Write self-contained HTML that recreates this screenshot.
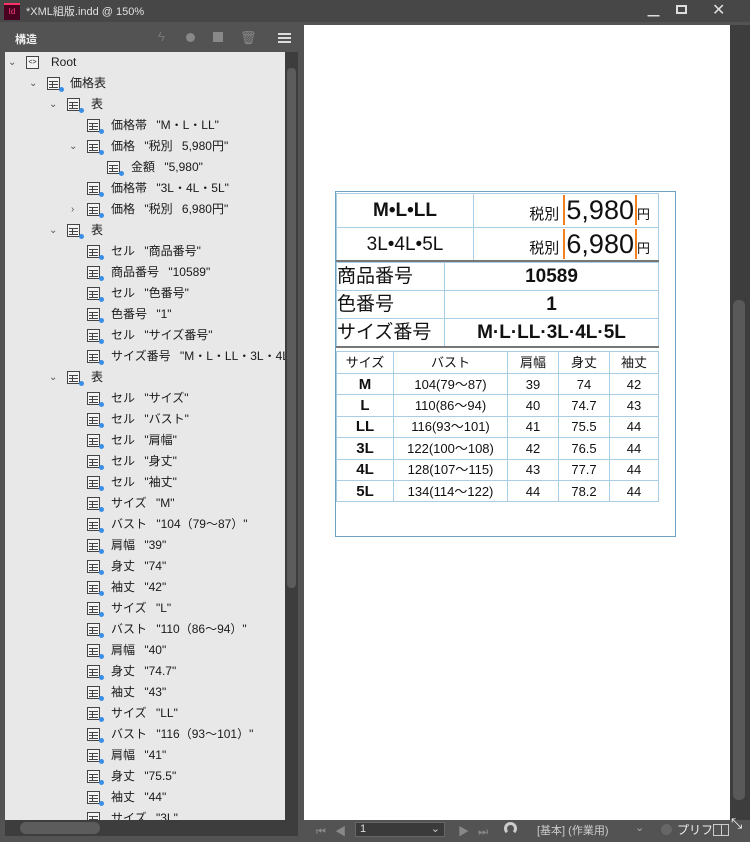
<!DOCTYPE html>
<html><head><meta charset="utf-8"><style>
*{margin:0;padding:0;box-sizing:border-box}
body{width:750px;height:842px;background:#535353;position:relative;overflow:hidden;font-family:"Liberation Sans","Noto Sans CJK JP",sans-serif}
.abs{position:absolute}
.tree{left:5px;top:52px;width:280px;height:768px;background:#e8e8e8;overflow:hidden}
.r{position:absolute;height:21px;font-size:12px;color:#1a1a1a;white-space:nowrap;line-height:21px;word-spacing:6px}
.ch{position:absolute;font-size:10px;color:#555;top:0}
.ic{position:absolute;top:4px;width:13px;height:13px;border:1px solid #444;background:#f4f4f4}
.ic.t::before{content:"";position:absolute;left:1px;right:1px;top:3px;height:1px;background:#444;box-shadow:0 3px 0 #444,0 6px 0 #444}
.ic.t::after{content:"";position:absolute;left:4px;top:3px;width:1px;height:7px;background:#444}
.dot{position:absolute;width:5px;height:5px;border-radius:50%;background:#3a8ee6;top:14px}
.doc{left:304px;top:25px;width:426px;height:795px;background:#fff}
table{border-collapse:collapse;position:absolute;table-layout:fixed}
td{border:1px solid #a9cde4;text-align:center;color:#111;padding:0;line-height:1;overflow:hidden;white-space:nowrap}
</style></head><body>
<div class="abs" style="left:0;top:0;width:750px;height:22px;background:#474747"></div>
<div class="abs" style="left:4px;top:3px;width:16px;height:17px;background:#49021f;border-top:2px solid #ff3366;color:#ff3d7f;font-size:8px;line-height:14px;text-align:center">Id</div>
<div class="abs" style="left:26px;top:3px;color:#e0e0e0;font-size:11px">*XML組版.indd @ 150%</div>
<div class="abs" style="left:640px;top:2px;width:27px;height:18px;color:#ddd;font-size:12px;text-align:center">▁</div>
<div class="abs" style="left:676px;top:5px;width:11px;height:9px;border:2px solid #ddd"></div>
<div class="abs" style="left:712px;top:0;color:#ddd;font-size:16px">✕</div>
<div class="abs" style="left:15px;top:31px;color:#eee;font-size:11px;font-weight:bold">構造</div>
<div class="abs" style="left:158px;top:29px;color:#777;font-size:13px">ϟ</div>
<div class="abs" style="left:186px;top:33px;width:9px;height:9px;border-radius:50%;background:#888"></div>
<div class="abs" style="left:213px;top:32px;width:10px;height:10px;background:#888"></div>
<div class="abs" style="left:240px;top:30px;color:#888;font-size:13px">🗑</div>
<div class="abs" style="left:278px;top:33px;width:13px;height:2px;background:#ddd;box-shadow:0 4px 0 #ddd,0 8px 0 #ddd"></div>
<div class="abs tree">
<div class="r" style="top:0"><span class="ch" style="left:3px">⌄</span><span class="ic" style="left:21px;font-size:7px;line-height:11px;text-align:center">&lt;&gt;</span><span style="position:absolute;left:46px">Root</span></div>
<div class="r" style="top:21px"><span class="ch" style="left:24px">⌄</span><span class="ic t" style="left:42px"></span><span class="dot" style="left:54px"></span><span style="position:absolute;left:65px">価格表</span></div>
<div class="r" style="top:42px"><span class="ch" style="left:44px">⌄</span><span class="ic t" style="left:62px"></span><span class="dot" style="left:74px"></span><span style="position:absolute;left:86px">表</span></div>
<div class="r" style="top:63px"><span class="ic t" style="left:82px"></span><span class="dot" style="left:94px"></span><span style="position:absolute;left:106px">価格帯 "M・L・LL"</span></div>
<div class="r" style="top:84px"><span class="ch" style="left:64px">⌄</span><span class="ic t" style="left:82px"></span><span class="dot" style="left:94px"></span><span style="position:absolute;left:106px">価格 "税別 5,980円"</span></div>
<div class="r" style="top:105px"><span class="ic t" style="left:102px"></span><span class="dot" style="left:114px"></span><span style="position:absolute;left:126px">金額 "5,980"</span></div>
<div class="r" style="top:126px"><span class="ic t" style="left:82px"></span><span class="dot" style="left:94px"></span><span style="position:absolute;left:106px">価格帯 "3L・4L・5L"</span></div>
<div class="r" style="top:147px"><span class="ch" style="left:66px">›</span><span class="ic t" style="left:82px"></span><span class="dot" style="left:94px"></span><span style="position:absolute;left:106px">価格 "税別 6,980円"</span></div>
<div class="r" style="top:168px"><span class="ch" style="left:44px">⌄</span><span class="ic t" style="left:62px"></span><span class="dot" style="left:74px"></span><span style="position:absolute;left:86px">表</span></div>
<div class="r" style="top:189px"><span class="ic t" style="left:82px"></span><span class="dot" style="left:94px"></span><span style="position:absolute;left:106px">セル "商品番号"</span></div>
<div class="r" style="top:210px"><span class="ic t" style="left:82px"></span><span class="dot" style="left:94px"></span><span style="position:absolute;left:106px">商品番号 "10589"</span></div>
<div class="r" style="top:231px"><span class="ic t" style="left:82px"></span><span class="dot" style="left:94px"></span><span style="position:absolute;left:106px">セル "色番号"</span></div>
<div class="r" style="top:252px"><span class="ic t" style="left:82px"></span><span class="dot" style="left:94px"></span><span style="position:absolute;left:106px">色番号 "1"</span></div>
<div class="r" style="top:273px"><span class="ic t" style="left:82px"></span><span class="dot" style="left:94px"></span><span style="position:absolute;left:106px">セル "サイズ番号"</span></div>
<div class="r" style="top:294px"><span class="ic t" style="left:82px"></span><span class="dot" style="left:94px"></span><span style="position:absolute;left:106px">サイズ番号 "M・L・LL・3L・4L"</span></div>
<div class="r" style="top:315px"><span class="ch" style="left:44px">⌄</span><span class="ic t" style="left:62px"></span><span class="dot" style="left:74px"></span><span style="position:absolute;left:86px">表</span></div>
<div class="r" style="top:336px"><span class="ic t" style="left:82px"></span><span class="dot" style="left:94px"></span><span style="position:absolute;left:106px">セル "サイズ"</span></div>
<div class="r" style="top:357px"><span class="ic t" style="left:82px"></span><span class="dot" style="left:94px"></span><span style="position:absolute;left:106px">セル "バスト"</span></div>
<div class="r" style="top:378px"><span class="ic t" style="left:82px"></span><span class="dot" style="left:94px"></span><span style="position:absolute;left:106px">セル "肩幅"</span></div>
<div class="r" style="top:399px"><span class="ic t" style="left:82px"></span><span class="dot" style="left:94px"></span><span style="position:absolute;left:106px">セル "身丈"</span></div>
<div class="r" style="top:420px"><span class="ic t" style="left:82px"></span><span class="dot" style="left:94px"></span><span style="position:absolute;left:106px">セル "袖丈"</span></div>
<div class="r" style="top:441px"><span class="ic t" style="left:82px"></span><span class="dot" style="left:94px"></span><span style="position:absolute;left:106px">サイズ "M"</span></div>
<div class="r" style="top:462px"><span class="ic t" style="left:82px"></span><span class="dot" style="left:94px"></span><span style="position:absolute;left:106px">バスト "104（79～87）"</span></div>
<div class="r" style="top:483px"><span class="ic t" style="left:82px"></span><span class="dot" style="left:94px"></span><span style="position:absolute;left:106px">肩幅 "39"</span></div>
<div class="r" style="top:504px"><span class="ic t" style="left:82px"></span><span class="dot" style="left:94px"></span><span style="position:absolute;left:106px">身丈 "74"</span></div>
<div class="r" style="top:525px"><span class="ic t" style="left:82px"></span><span class="dot" style="left:94px"></span><span style="position:absolute;left:106px">袖丈 "42"</span></div>
<div class="r" style="top:546px"><span class="ic t" style="left:82px"></span><span class="dot" style="left:94px"></span><span style="position:absolute;left:106px">サイズ "L"</span></div>
<div class="r" style="top:567px"><span class="ic t" style="left:82px"></span><span class="dot" style="left:94px"></span><span style="position:absolute;left:106px">バスト "110（86～94）"</span></div>
<div class="r" style="top:588px"><span class="ic t" style="left:82px"></span><span class="dot" style="left:94px"></span><span style="position:absolute;left:106px">肩幅 "40"</span></div>
<div class="r" style="top:609px"><span class="ic t" style="left:82px"></span><span class="dot" style="left:94px"></span><span style="position:absolute;left:106px">身丈 "74.7"</span></div>
<div class="r" style="top:630px"><span class="ic t" style="left:82px"></span><span class="dot" style="left:94px"></span><span style="position:absolute;left:106px">袖丈 "43"</span></div>
<div class="r" style="top:651px"><span class="ic t" style="left:82px"></span><span class="dot" style="left:94px"></span><span style="position:absolute;left:106px">サイズ "LL"</span></div>
<div class="r" style="top:672px"><span class="ic t" style="left:82px"></span><span class="dot" style="left:94px"></span><span style="position:absolute;left:106px">バスト "116（93～101）"</span></div>
<div class="r" style="top:693px"><span class="ic t" style="left:82px"></span><span class="dot" style="left:94px"></span><span style="position:absolute;left:106px">肩幅 "41"</span></div>
<div class="r" style="top:714px"><span class="ic t" style="left:82px"></span><span class="dot" style="left:94px"></span><span style="position:absolute;left:106px">身丈 "75.5"</span></div>
<div class="r" style="top:735px"><span class="ic t" style="left:82px"></span><span class="dot" style="left:94px"></span><span style="position:absolute;left:106px">袖丈 "44"</span></div>
<div class="r" style="top:756px"><span class="ic t" style="left:82px"></span><span class="dot" style="left:94px"></span><span style="position:absolute;left:106px">サイズ "3L"</span></div>
</div>
<div class="abs" style="left:285px;top:52px;width:13px;height:768px;background:#3d3d3d"></div>
<div class="abs" style="left:287px;top:68px;width:9px;height:520px;border-radius:4px;background:#5c5c5c"></div>
<div class="abs" style="left:5px;top:820px;width:293px;height:16px;background:#3d3d3d"></div>
<div class="abs" style="left:20px;top:822px;width:80px;height:12px;border-radius:6px;background:#5c5c5c"></div>
<div class="abs doc"></div>
<div class="abs" style="left:730px;top:25px;width:20px;height:795px;background:#3d3d3d"></div>
<div class="abs" style="left:733px;top:300px;width:12px;height:500px;border-radius:5px;background:#595959"></div>
<div class="abs" style="left:335px;top:191px;width:341px;height:346px;border:1px solid #6fa1c3"></div>
<table style="left:336px;top:193px;width:323px;font-size:19px">
<tr style="height:34px"><td style="width:137px;font-weight:bold">M•L•LL</td><td style="text-align:right;padding-right:8px"><span style="font-size:15px">税別 </span><span style="font-size:27px;border-left:2px solid #f08020;border-right:2px solid #f08020;padding:0 1px">5,980</span><span style="font-size:13px">円</span></td></tr>
<tr style="height:34px"><td>3L•4L•5L</td><td style="text-align:right;padding-right:8px"><span style="font-size:15px">税別 </span><span style="font-size:27px;border-left:2px solid #f08020;border-right:2px solid #f08020;padding:0 1px">6,980</span><span style="font-size:13px">円</span></td></tr>
</table>
<div class="abs" style="left:336px;top:260px;width:323px;height:2px;background:#777"></div>
<table style="left:336px;top:262px;width:323px;font-size:19px">
<tr style="height:28px"><td style="width:108px;text-align:left">商品番号</td><td style="font-weight:bold">10589</td></tr>
<tr style="height:28px"><td style="text-align:left">色番号</td><td style="font-weight:bold">1</td></tr>
<tr style="height:28px"><td style="text-align:left">サイズ番号</td><td style="font-weight:bold">M·L·LL·3L·4L·5L</td></tr>
</table>
<div class="abs" style="left:336px;top:346px;width:323px;height:2px;background:#777"></div>
<table style="left:336px;top:351px;width:323px;font-size:13px">
<tr style="height:22px"><td style="width:57px">サイズ</td><td style="width:114px">バスト</td><td style="width:51px">肩幅</td><td style="width:51px">身丈</td><td>袖丈</td></tr>
<tr style="height:21.4px"><td style="font-weight:bold;font-size:15px">M</td><td>104(79～87)</td><td>39</td><td>74</td><td>42</td></tr>
<tr style="height:21.4px"><td style="font-weight:bold;font-size:15px">L</td><td>110(86～94)</td><td>40</td><td>74.7</td><td>43</td></tr>
<tr style="height:21.4px"><td style="font-weight:bold;font-size:15px">LL</td><td>116(93～101)</td><td>41</td><td>75.5</td><td>44</td></tr>
<tr style="height:21.4px"><td style="font-weight:bold;font-size:15px">3L</td><td>122(100～108)</td><td>42</td><td>76.5</td><td>44</td></tr>
<tr style="height:21.4px"><td style="font-weight:bold;font-size:15px">4L</td><td>128(107～115)</td><td>43</td><td>77.7</td><td>44</td></tr>
<tr style="height:21.4px"><td style="font-weight:bold;font-size:15px">5L</td><td>134(114～122)</td><td>44</td><td>78.2</td><td>44</td></tr>
</table>
<div class="abs" style="left:316px;top:823px;color:#888;font-size:11px">⏮&nbsp;&nbsp;&nbsp;◀</div>
<div class="abs" style="left:355px;top:822px;width:90px;height:15px;background:#3a3a3a;border:1px solid #666;color:#ddd;font-size:11px;padding-left:4px;line-height:13px">1<span style="position:absolute;right:4px;color:#ccc">⌄</span></div>
<div class="abs" style="left:458px;top:823px;color:#888;font-size:11px">▶&nbsp;&nbsp;&nbsp;⏭</div>
<div class="abs" style="left:504px;top:822px;width:13px;height:13px;border-radius:50%;border:3px solid #ccc;border-bottom-color:transparent"></div>
<div class="abs" style="left:537px;top:822px;color:#ccc;font-size:11px">[基本] (作業用)</div>
<div class="abs" style="left:635px;top:821px;color:#aaa;font-size:11px">⌄</div>
<div class="abs" style="left:661px;top:824px;width:11px;height:11px;border-radius:50%;background:#666"></div>
<div class="abs" style="left:677px;top:821px;color:#eee;font-size:12px">プリフ</div>
<div class="abs" style="left:713px;top:824px;width:16px;height:12px;border:1px solid #ccc"><div style="position:absolute;left:7px;top:0;width:1px;height:10px;background:#ccc"></div></div>
<div class="abs" style="left:731px;top:815px;color:#fff;font-size:14px">⤡</div>
</body></html>
